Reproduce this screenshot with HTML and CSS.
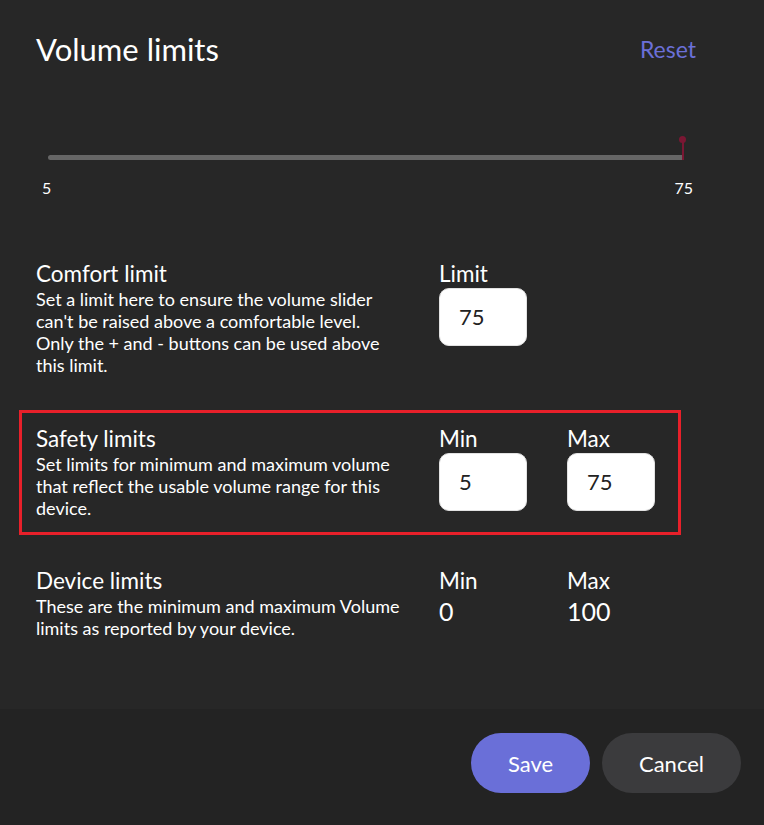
FILE: index.html
```html
<!DOCTYPE html>
<html>
<head>
<meta charset="utf-8">
<link rel="stylesheet" href="styles.css">
</head>
<body>
<div class="dialog">
  <div class="content">
    <div class="header">
      <h1 class="title">Volume limits</h1>
      <span class="reset">Reset</span>
    </div>
    <div class="slider">
      <div class="track"></div>
      <div class="thumb"><span class="dot"></span><span class="stem"></span></div>
    </div>
    <div class="slider-labels">
      <span>5</span>
      <span>75</span>
    </div>

    <div class="row comfort">
      <div class="info">
        <div class="row-title">Comfort limit</div>
        <div class="desc">Set a limit here to ensure the volume slider can't be raised above a comfortable level.<br>Only the + and - buttons can be used above this limit.</div>
      </div>
      <div class="fields">
        <div class="field">
          <div class="label">Limit</div>
          <div class="input">75</div>
        </div>
      </div>
    </div>

    <div class="row safety">
      <div class="info">
        <div class="row-title">Safety limits</div>
        <div class="desc">Set limits for minimum and maximum volume that reflect the usable volume range for this device.</div>
      </div>
      <div class="fields">
        <div class="field">
          <div class="label">Min</div>
          <div class="input">5</div>
        </div>
        <div class="field">
          <div class="label">Max</div>
          <div class="input">75</div>
        </div>
      </div>
    </div>

    <div class="row device">
      <div class="info">
        <div class="row-title">Device limits</div>
        <div class="desc">These are the minimum and maximum Volume limits as reported by your device.</div>
      </div>
      <div class="fields">
        <div class="field">
          <div class="label">Min</div>
          <div class="value">0</div>
        </div>
        <div class="field">
          <div class="label">Max</div>
          <div class="value">100</div>
        </div>
      </div>
    </div>
  </div>
  <div class="footer">
    <button class="btn save">Save</button>
    <button class="btn cancel">Cancel</button>
  </div>
</div>
</body>
</html>
```
FILE: styles.css
```css
* { box-sizing: border-box; }
html, body { margin: 0; padding: 0; }
body {
  background: #272727;
  font-family: Lato, "Open Sans", sans-serif;
  color: #ffffff;
}
.dialog {
  width: 764px;
  height: 825px;
  display: flex;
  flex-direction: column;
}
.content {
  height: 709px;
  padding: 0 0 0 36px;
  background: #272727;
}
.header {
  display: flex;
  justify-content: space-between;
  align-items: center;
  width: 660px;
  padding-top: 28px;
}
.title {
  margin: 0;
  font-size: 31px;
  font-weight: 400;
  line-height: 40px;
}
.reset {
  color: #6b70d8;
  font-size: 23px;
  line-height: 40px;
  margin-top: 1px;
}
.slider {
  position: relative;
  margin-top: 86px;
  margin-left: 12px;
  width: 636px;
  height: 8px;
}
.track {
  height: 5px;
  background: #666666;
  border-radius: 3px 0 0 3px;
  width: 635px;
}
.thumb {
  position: absolute;
  left: 631px;
  top: -19px;
  width: 8px;
  height: 24px;
}
.dot {
  position: absolute;
  left: 0;
  top: 0;
  width: 7px;
  height: 7px;
  border-radius: 50%;
  background: #7a1733;
}
.stem {
  position: absolute;
  left: 3px;
  top: 3px;
  width: 2px;
  height: 21px;
  background: #7a1733;
}
.slider-labels {
  display: flex;
  justify-content: space-between;
  width: 651px;
  margin-left: 6px;
  margin-top: 15px;
  font-size: 16px;
  line-height: 20px;
}
.row {
  display: flex;
}
.info {
  width: 403px;
  padding-right: 35px;
}
.row-title {
  font-size: 22.5px;
  line-height: 28px;
}
.desc {
  font-size: 18px;
  line-height: 22px;
}
.fields {
  display: flex;
  gap: 40px;
}
.field {
  width: 88px;
}
.label {
  font-size: 22.5px;
  line-height: 28px;
}
.input {
  width: 88px;
  height: 58px;
  background: #ffffff;
  border: 1px solid #e2e2e2;
  border-radius: 10px;
  color: #222222;
  font-size: 22px;
  line-height: 56px;
  padding-left: 19px;
}
.value {
  font-size: 25px;
  line-height: 32px;
}
.comfort {
  margin-top: 62px;
}
.safety {
  margin-top: 34px;
  margin-left: -17px;
  width: 662px;
  border: 3px solid #e8202a;
  padding: 12px 0 13px 14px;
}
.device {
  margin-top: 32px;
}
.footer {
  flex: 1;
  background: #232323;
  display: flex;
  justify-content: flex-end;
  align-items: flex-start;
  gap: 12px;
  padding: 24px 23px 0 0;
}
.btn {
  height: 60px;
  border: none;
  border-radius: 30px;
  color: #ffffff;
  font-family: Lato, "Open Sans", sans-serif;
  font-size: 22px;
}
.save {
  width: 119px;
  background: #6a6fd8;
}
.cancel {
  width: 139px;
  background: #3b3b3d;
}
```
